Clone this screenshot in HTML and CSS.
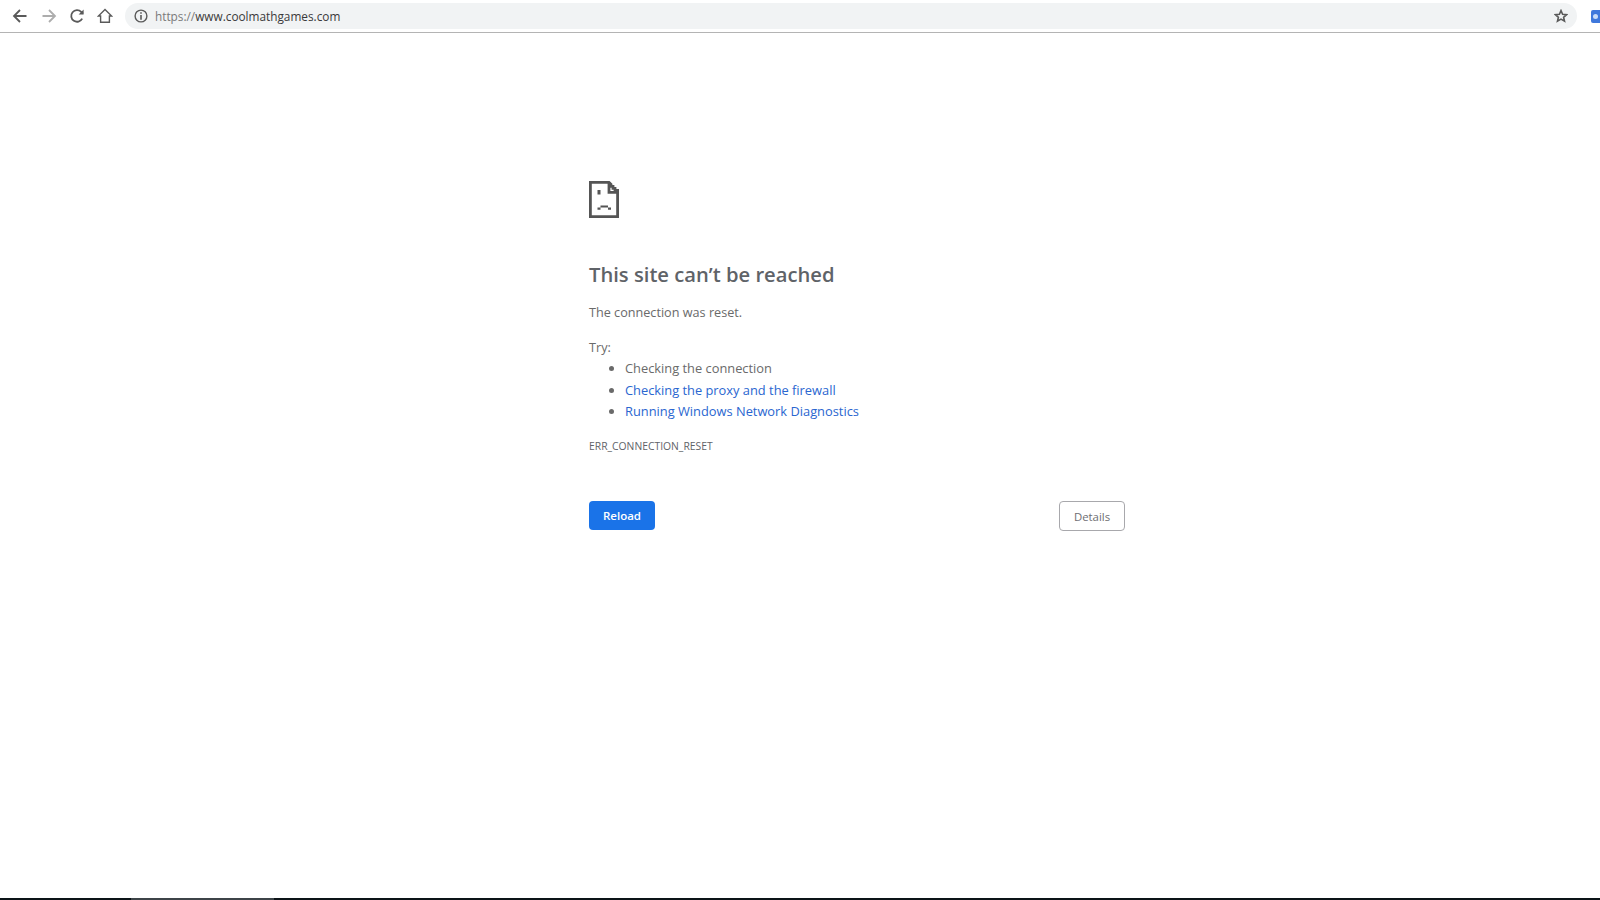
FILE: index.html
```html
<!DOCTYPE html>
<html lang="en">
<head>
<meta charset="utf-8">
<title>www.coolmathgames.com</title>
<link rel="stylesheet" href="styles.css">
</head>
<body>
<header class="toolbar">
  <button class="nav-btn" aria-label="Back"><svg width="16" height="16" viewBox="0 0 16 16"><path d="M14.5 8H2.5M8 2L2 8l6 6" class="ic"/></svg></button>
  <button class="nav-btn" aria-label="Forward"><svg width="16" height="16" viewBox="0 0 16 16"><path d="M1.5 8h12M8 2l6 6-6 6" class="ic ic-off"/></svg></button>
  <button class="nav-btn" aria-label="Reload"><svg width="16" height="16" viewBox="0 0 16 16"><path d="M13.2 10.6A5.8 5.8 0 1 1 12.2 3.9L14 5.7" class="ic"/><path d="M14.6 1.6v5h-5z" class="ic-fill"/></svg></button>
  <button class="nav-btn" aria-label="Home"><svg width="16" height="16" viewBox="0 0 16 16"><path d="M8 1.6L1.4 8H3.6v6.2h8.8V8h2.2z" class="ic ic-thin"/></svg></button>
  <div class="omnibox">
    <svg class="info" width="14" height="14" viewBox="0 0 14 14"><circle cx="7" cy="7" r="5.9" class="ic ic-thin"/><path d="M6.2 3.2h1.6v1.6H6.2zM6.2 6h1.6v4.8H6.2z" class="ic-fill"/></svg>
    <span class="url"><span class="scheme">https://</span>www.coolmathgames.com</span>
    <svg class="star" width="14" height="14" viewBox="0 0 14 14"><path d="M7 1.6l1.6 3.7 4 .35-3 2.65.9 3.9L7 10.1l-3.5 2.1.9-3.9-3-2.65 4-.35z" class="ic ic-thick"/></svg>
  </div>
  <div class="ext"><span class="ext-dot"></span></div>
</header>
<main class="page">
  <div class="error">
    <svg class="sad" width="30" height="37" viewBox="0 0 30 37">
      <path class="sad-line" d="M1.4 1.4h18.6l2 2v2h2v2h2v2h2.6v26.2H1.4z"/>
      <path class="sad-line" d="M20 1.4v10h9"/>
      <path class="sad-fill" d="M8.5 9h3v4.5h-3zM11.5 24.5h7.5v2h-7.5zM8.5 26.5h3v2.2h-3zM19 26.5h3v2.2h-3z"/>
    </svg>
    <h1 class="title">This site can’t be reached</h1>
    <p class="desc">The connection was reset.</p>
    <p class="try">Try:</p>
    <ul class="tips">
      <li>Checking the connection</li>
      <li><a href="#">Checking the proxy and the firewall</a></li>
      <li><a href="#">Running Windows Network Diagnostics</a></li>
    </ul>
    <div class="code">ERR_CONNECTION_RESET</div>
    <div class="actions">
      <button class="btn-reload">Reload</button>
      <button class="btn-details">Details</button>
    </div>
  </div>
</main>
<footer class="taskbar"><span class="task-item"></span></footer>
</body>
</html>
```

FILE: styles.css
```css
* { box-sizing: border-box; }
html, body { margin: 0; height: 900px; overflow: hidden; }
body {
  display: flex;
  flex-direction: column;
  background: #fff;
  font-family: "Open Sans", "Noto Sans", sans-serif;
  color: #6a6a6a;
}
.toolbar {
  flex: none;
  height: 33px;
  display: flex;
  align-items: center;
  padding: 0 0 0 6px;
  border-bottom: 1px solid #b4b4b4;
  background: #fff;
}
.nav-btn {
  width: 28.4px;
  height: 28px;
  padding: 0;
  border: 0;
  background: none;
  display: flex;
  align-items: center;
  justify-content: center;
}
.ic { fill: none; stroke: #5a5a5a; stroke-width: 1.8; }
.ic-off { stroke: #adadad; }
.ic-thin { stroke-width: 1.4; }
.ic-thick { stroke-width: 1.6; }
.ic-fill { fill: #5a5a5a; }
.omnibox {
  flex: none;
  width: 1452px;
  height: 26px;
  margin-left: 5.4px;
  display: flex;
  align-items: center;
  padding: 0 9px;
  background: #f1f3f4;
  border-radius: 13px;
}
.info { flex: none; }
.url {
  margin-left: 7px;
  font-size: 11.8px;
  color: #3a3a3a;
  flex: 1;
}
.scheme { color: #7a7a7a; }
.star { flex: none; }
.ext {
  flex: none;
  margin-left: 14px;
  width: 9px;
  height: 13px;
  background: #3f78dc;
  border-radius: 2px 0 0 2px;
  display: flex;
  align-items: center;
  justify-content: center;
}
.ext-dot { width: 5px; height: 5px; border-radius: 50%; background: #c9dcf8; }
.page {
  flex: 1;
  padding: 148px 0 0 589px;
}
.error { width: 536px; }
.sad { display: block; }
.sad-line { fill: none; stroke: #555; stroke-width: 2.8; }
.sad-fill { fill: #555; }
.title {
  margin: 42px 0 0;
  font-size: 20.2px;
  line-height: 28px;
  font-weight: 600;
  color: #5f6368;
}
.desc {
  margin: 14px 0 0;
  font-size: 12.65px;
  line-height: 20px;
}
.try {
  margin: 15px 0 0;
  font-size: 12.65px;
  line-height: 20px;
}
.tips {
  margin: 1px 0 0;
  padding: 0 0 0 36px;
  font-size: 12.85px;
  line-height: 21.5px;
}
.tips a { color: #2a66d0; text-decoration: none; }
.code {
  margin-top: 15.7px;
  font-size: 10.35px;
  line-height: 16px;
  color: #5f6368;
}
.actions {
  margin-top: 47px;
  display: flex;
  justify-content: space-between;
  align-items: flex-start;
}
.btn-reload {
  width: 66px;
  height: 29px;
  padding: 0;
  border: 0;
  border-radius: 4px;
  background: #1a73e8;
  color: #fff;
  font: 600 11.5px "Open Sans", "Noto Sans", sans-serif;
}
.btn-details {
  width: 66px;
  height: 30px;
  padding: 0;
  border: 1px solid #a8a8ac;
  border-radius: 4px;
  background: #fff;
  color: #6e6e72;
  font: 11.4px "Open Sans", "Noto Sans", sans-serif;
}
.taskbar {
  flex: none;
  height: 2px;
  padding-left: 131px;
  background: #0c1418;
}
.task-item { display: block; width: 143px; height: 2px; background: #3d4448; }
```
